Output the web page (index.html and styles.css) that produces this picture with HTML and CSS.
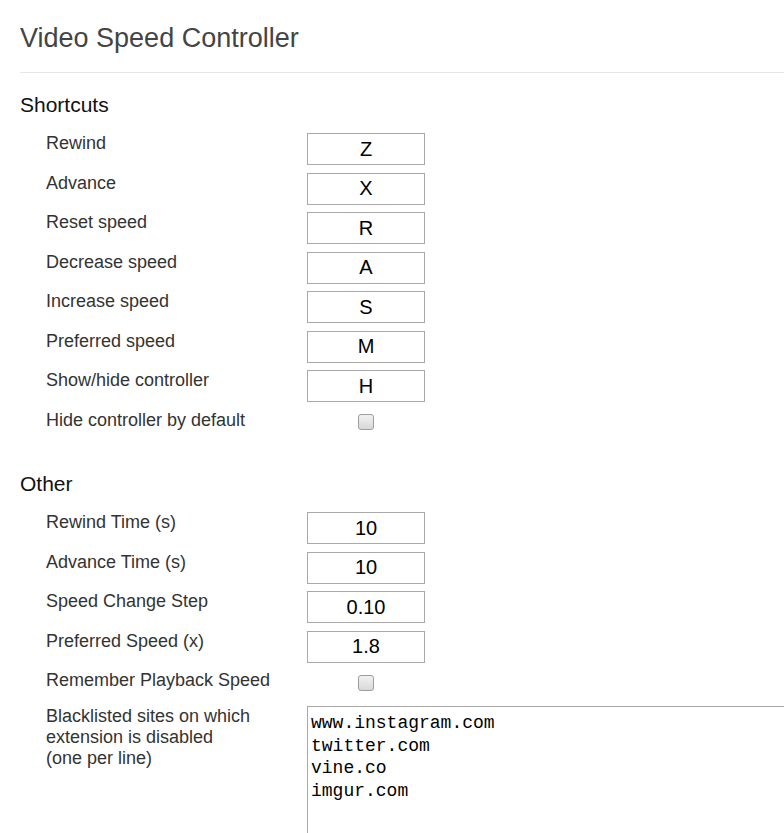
FILE: index.html
```html
<!DOCTYPE html>
<html>
<head>
    <meta name="viewport" content="width=device-width, initial-scale=1.0">
    <link rel="stylesheet" href="styles.css">
</head>
<body>
    <h1 class="title">Video Speed Controller</h1>
    <hr class="divider">

    <section class="group">
        <h3 class="group-title">Shortcuts</h3>
        <div class="row"><label>Rewind</label><input class="field" value="Z"></div>
        <div class="row"><label>Advance</label><input class="field" value="X"></div>
        <div class="row"><label>Reset speed</label><input class="field" value="R"></div>
        <div class="row"><label>Decrease speed</label><input class="field" value="A"></div>
        <div class="row"><label>Increase speed</label><input class="field" value="S"></div>
        <div class="row"><label>Preferred speed</label><input class="field" value="M"></div>
        <div class="row"><label>Show/hide controller</label><input class="field" value="H"></div>
        <div class="row check-row"><label>Hide controller by default</label><input type="checkbox" class="check"></div>
    </section>

    <section class="group other">
        <h3 class="group-title">Other</h3>
        <div class="row"><label>Rewind Time (s)</label><input class="field" value="10"></div>
        <div class="row"><label>Advance Time (s)</label><input class="field" value="10"></div>
        <div class="row"><label>Speed Change Step</label><input class="field" value="0.10"></div>
        <div class="row"><label>Preferred Speed (x)</label><input class="field" value="1.8"></div>
        <div class="row check-row"><label>Remember Playback Speed</label><input type="checkbox" class="check"></div>
        <div class="row"><label>Blacklisted sites on which<br>extension is disabled<br>(one per line)</label><textarea class="sites">www.instagram.com
twitter.com
vine.co
imgur.com</textarea></div>
    </section>
</body>
</html>
```

FILE: styles.css
```css
* {
    box-sizing: border-box;
}

body {
    margin: 0;
    padding: 23px 0 0 20px;
    font-family: 'Liberation Sans', Arial, sans-serif;
    background: #fff;
    overflow: hidden;
}

.title {
    margin: 0;
    font-size: 27px;
    font-weight: normal;
    color: #444;
}

.divider {
    margin: 18px 0 20px;
    border: none;
    border-top: 1px solid #e6e6e6;
}

.group-title {
    margin: 0 0 16px;
    font-size: 21px;
    font-weight: normal;
    color: #111;
}

.other {
    margin-top: 34px;
}

.row {
    display: grid;
    grid-template-columns: 261px 118px;
    align-items: start;
    margin: 0 0 7.5px 26px;
}

.row label {
    font-size: 18px;
    color: #333;
}

.field {
    width: 118px;
    height: 32px;
    padding: 0;
    border: 1px solid #a9a9a9;
    font-family: 'Liberation Sans', Arial, sans-serif;
    font-size: 20px;
    text-align: center;
    color: #000;
}

.check-row {
    height: 28.5px;
}

.check {
    -webkit-appearance: none;
    appearance: none;
    justify-self: center;
    width: 16px;
    height: 16px;
    margin: 4.5px 0 0;
    border: 1px solid #9d9d9d;
    border-radius: 3px;
    background: linear-gradient(#f1f1f1, #d8d8d8);
}

.sites {
    width: 600px;
    height: 160px;
    padding: 5px 3px;
    border: 1px solid #a9a9a9;
    font-family: 'Liberation Mono', monospace;
    font-size: 18px;
    line-height: 22.7px;
    color: #000;
    resize: none;
}
```
